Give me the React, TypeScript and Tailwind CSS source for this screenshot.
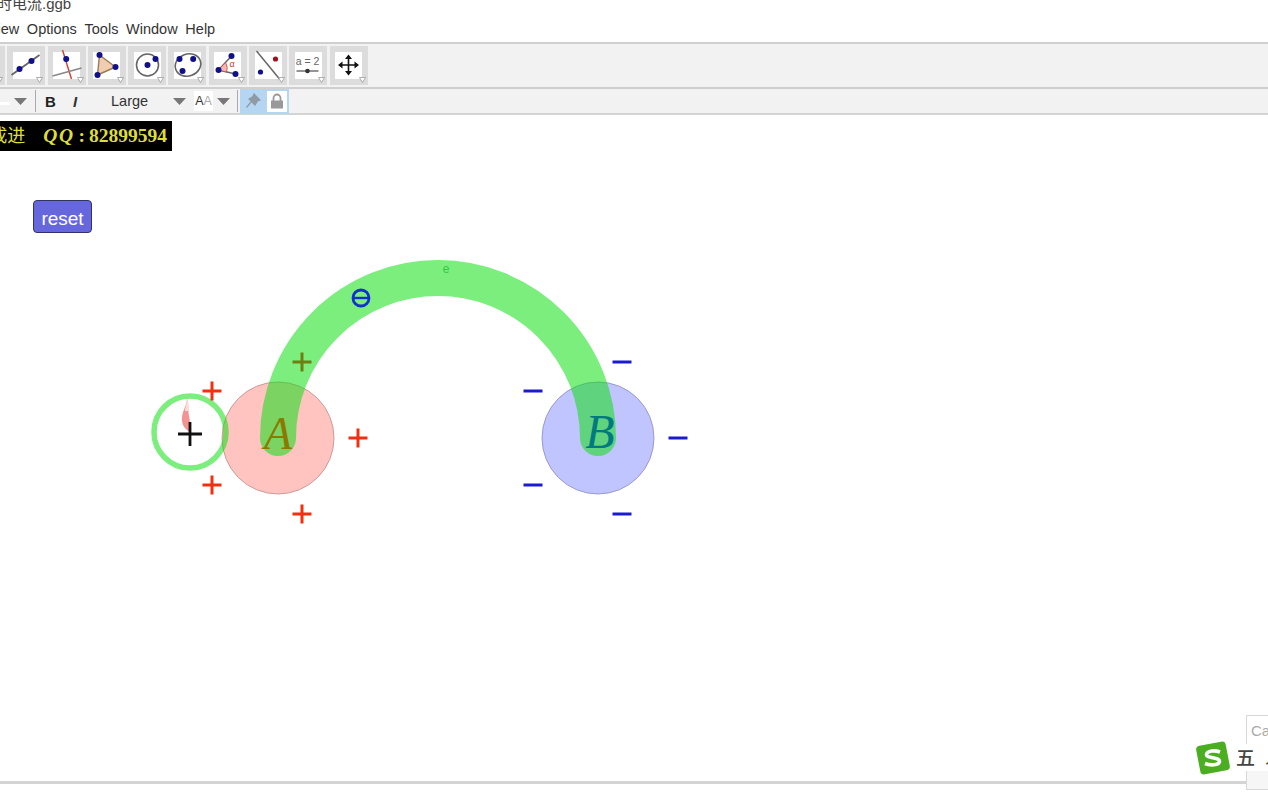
const sans = { fontFamily: '"Liberation Sans", Arial, sans-serif' }

const Dot = ({ x, y, fill = '#10108a', r = 3 }: { x: number; y: number; fill?: string; r?: number }) => (
  <circle cx={x} cy={y} r={r} fill={fill} />
)

// toolbar icons, drawn in a 30x30 box
const icons = [
  <>
    <line x1="0" y1="24.5" x2="28" y2="4.5" stroke="#666" strokeWidth="1.8" />
    <Dot x={8} y={18.5} />
    <Dot x={20} y={10.5} />
  </>,
  <>
    <line x1="11" y1="-0.5" x2="20" y2="28.5" stroke="#d04030" strokeWidth="1.4" />
    <line x1="1" y1="25.5" x2="30" y2="17.5" stroke="#888" strokeWidth="1.8" />
    <Dot x={14.7} y={8.5} />
  </>,
  <>
    <polygon points="8,4.5 24,16.5 6,24.5" fill="#f0cdb0" stroke="#9a7a50" strokeWidth="1.4" />
    <Dot x={8} y={4.5} />
    <Dot x={24} y={16.5} />
    <Dot x={6} y={24.5} />
  </>,
  <>
    <circle cx="15" cy="14.5" r="11" fill="none" stroke="#666" strokeWidth="1.6" />
    <Dot x={15} y={14.5} />
    <Dot x={23} y={8.5} />
  </>,
  <>
    <ellipse cx="15.5" cy="14.5" rx="13" ry="11" fill="none" stroke="#666" strokeWidth="1.6" transform="rotate(-20 15.5 14.5)" />
    <Dot x={7} y={8.5} />
    <Dot x={20.7} y={8.5} />
    <Dot x={10} y={20.5} />
  </>,
  <>
    <path d="M6 19.5 L19 5.5 M6 19.5 L23 23.5" stroke="#666" strokeWidth="1.5" fill="none" />
    <path d="M6 19.5 L13 12 Q16 17 14 21.5 Z" fill="#f5b8b8" stroke="#d04030" strokeWidth="0.8" />
    <Dot x={6} y={19.5} />
    <Dot x={19} y={5.5} />
    <Dot x={23} y={23.5} />
    <text x="17" y="16" fontSize="9" fill="#d04030" style={sans}>α</text>
  </>,
  <>
    <line x1="3" y1="0.5" x2="26" y2="28.5" stroke="#666" strokeWidth="1.5" />
    <Dot x={22} y={8.5} fill="#a01020" r={2.6} />
    <Dot x={7} y={21.5} r={2.6} />
  </>,
  <>
    <text x="14" y="14" fontSize="10.5" textAnchor="middle" fill="#666" style={sans}>a = 2</text>
    <line x1="3" y1="20.5" x2="25" y2="20.5" stroke="#666" strokeWidth="1.4" />
    <circle cx="14" cy="20.5" r="2.3" fill="#333" />
  </>,
  <>
    <path d="M15 6 V23 M6.5 14.5 H23.5" stroke="#111" strokeWidth="1.6" />
    <path d="M15 4 L11.5 8.5 H18.5 Z M15 25 L11.5 20.5 H18.5 Z M4.5 14.5 L9 11 V18 Z M25.5 14.5 L21 11 V18 Z" fill="#111" />
  </>,
]

const ToolButton = ({ children }: { children?: React.ReactNode }) => (
  <div className="relative flex h-[39px] w-[38px] shrink-0 items-center justify-center bg-[#dcdcdc]">
    <div className="h-[27px] w-[27px] bg-white">
      <svg viewBox="1.5 1.5 27 27" className="h-full w-full overflow-visible">{children}</svg>
    </div>
    <svg viewBox="0 0 7 6" className="absolute right-[2px] bottom-[2px] h-[6px] w-[7px]">
      <path d="M0.5 0.5 H6.5 L3.5 5.5 Z" fill="#fff" stroke="#999" strokeWidth="0.8" />
    </svg>
  </div>
)

const Caret = ({ className }: { className: string }) => (
  <svg viewBox="0 0 13 7" className={`h-[7px] w-[13px] shrink-0 ${className}`}>
    <path d="M0 0 H13 L6.5 7 Z" fill="#777" />
  </svg>
)

const Plus = ({ x, y, color = '#f03010', a = 9.5, w = 3 }: { x: number; y: number; color?: string; a?: number; w?: number }) => (
  <path d={`M${x - a} ${y} H${x + a} M${x} ${y - a} V${y + a}`} stroke={color} strokeWidth={w} fill="none" />
)

const Minus = ({ x, y }: { x: number; y: number }) => (
  <line x1={x - 9.5} y1={y} x2={x + 9.5} y2={y} stroke="#1a1ad0" strokeWidth="3" />
)

export default function App() {
  return (
    <div className="relative flex h-[793px] w-[1268px] flex-col overflow-hidden bg-white text-[#333]" style={sans}>
      {/* title */}
      <div className="-mt-[6px] h-[24px] shrink-0 text-[15px] leading-[20px] whitespace-nowrap text-[#444]" style={{ fontFamily: '"Liberation Sans", "Noto Sans CJK SC", sans-serif' }}>
        <span className="-ml-[3px] inline-block">时电流.ggb</span>
      </div>

      {/* menu */}
      <div className="flex h-[24px] shrink-0 items-center gap-[7.7px] pb-px text-[14.5px] whitespace-nowrap">
        <span className="-ml-[12px]">View</span>
        <span>Options</span>
        <span>Tools</span>
        <span>Window</span>
        <span>Help</span>
      </div>

      {/* toolbar */}
      <div className="flex h-[47px] shrink-0 items-center gap-[2.3px] border-y-2 border-y-[#cfcfcf] bg-[#f2f2f2]">
        <div className="-ml-[33px]">
          <ToolButton />
        </div>
        {icons.map((icon, i) => (
          <ToolButton key={i}>{icon}</ToolButton>
        ))}
      </div>

      {/* style bar */}
      <div className="flex h-[26px] shrink-0 items-center border-b-2 border-b-[#d4d4d4] bg-[#f2f2f2] text-[14.5px]">
        <div className="mt-[5px] h-[3px] w-[10px] bg-white" />
        <Caret className="ml-[4px]" />
        <div className="ml-[8px] h-[22px] w-px bg-[#aaa]" />
        <span className="mt-[2px] ml-[9px] w-[11px] text-[15px] font-bold text-[#222]">B</span>
        <span className="mt-[2px] ml-[17px] w-[6px] text-[15px] font-bold text-[#333] italic">I</span>
        <span className="mt-[2px] ml-[32px] w-[56px]">Large</span>
        <Caret className="ml-[6px]" />
        <div className="ml-[8px] flex h-[20px] w-[19px] items-center justify-center bg-white text-[12.5px]">
          A<span className="text-[#aaa]">A</span>
        </div>
        <Caret className="ml-[4px]" />
        <div className="ml-[7px] h-[22px] w-px bg-[#aaa]" />
        <div className="ml-[2px] flex h-[25px] w-[25px] items-center justify-center bg-[#b4d6f2]">
          <svg viewBox="0 0 16 16" className="h-[16px] w-[16px]">
            <path d="M9 1 L15 7 L12.5 8 L10 12 L4 6 L8 3.5 Z M6 9 L1.5 14.5" fill="#8f9aa5" stroke="#8f9aa5" strokeWidth="1.2" />
          </svg>
        </div>
        <div className="flex h-[25px] w-[24px] items-center justify-center border-2 border-[#b4d6f2] bg-white">
          <svg viewBox="0 0 16 16" className="h-[16px] w-[16px]">
            <path d="M4.5 8 V5 a3.5 3.5 0 0 1 7 0 V8" fill="none" stroke="#999" strokeWidth="1.8" />
            <rect x="2" y="7.5" width="12" height="8" fill="#999" />
          </svg>
        </div>
      </div>

      {/* canvas */}
      <div className="relative flex-1">
        <svg viewBox="0 115 1268 666" className="absolute inset-0 h-[666px] w-[1268px]">
          <circle cx="278" cy="438" r="56" fill="#ffc4c0" stroke="#c08a8a" strokeWidth="0.8" />
          <circle cx="598" cy="438" r="56" fill="#c0c4ff" stroke="#8a8ac0" strokeWidth="0.8" />
          <path d="M278 438 A160 160 0 0 1 598 438" fill="none" stroke="#0fe014" strokeOpacity="0.55" strokeWidth="36" strokeLinecap="round" />
          <circle cx="190" cy="432" r="36" fill="none" stroke="#0fe014" strokeOpacity="0.55" strokeWidth="5.5" />

          <path d="M187 398 C187 406 181 412 182 421 C183 428 187 430 191 433 C190 425 190 420 189 416 C188 410 189 405 187 398 Z" fill="#f28080" fillOpacity="0.85" />
          <path d="M187 398 C187 403 185 407 185 411 L189 411 C188 406 189 403 187 398 Z" fill="#fbdcd8" />
          <Plus x={190} y={434} color="#111" a={12} w={2.8} />

          <Plus x={212} y={391} />
          <Plus x={212} y={485} />
          <Plus x={302} y={514} />
          <Plus x={358} y={438} />
          <Plus x={302} y={362} color="#6f7f10" />

          <Minus x={622} y={362} />
          <Minus x={533} y={391} />
          <Minus x={678} y={438} />
          <Minus x={533} y={485} />
          <Minus x={622} y={514} />

          <circle cx="361" cy="298" r="8" fill="none" stroke="#1030d0" strokeWidth="2.8" />
          <line x1="353" y1="298" x2="369" y2="298" stroke="#1030d0" strokeWidth="2.4" />
          <text x="446" y="273" fontSize="12" textAnchor="middle" fill="#35c845" style={sans}>e</text>

          <text x="278" y="449" fontSize="46" textAnchor="middle" fill="#8a7a00" fontStyle="italic" style={{ fontFamily: '"Liberation Serif", serif' }}>A</text>
          <text x="600" y="448" fontSize="48" textAnchor="middle" fill="#007a80" fontStyle="italic" style={{ fontFamily: '"Liberation Serif", serif' }}>B</text>
        </svg>

        {/* banner text object */}
        <div
          className="absolute top-[6px] left-0 flex h-[30px] w-[172px] items-center justify-end overflow-hidden bg-black pr-[5px] text-[19.5px] font-bold whitespace-nowrap text-[#dede3a]"
          style={{ fontFamily: '"Liberation Serif", "Noto Sans CJK SC", serif' }}
        >
          <span className="text-[18px] font-normal">成进</span>
          <span className="ml-[18px] tracking-[1.5px] italic">QQ</span>
          <span className="mx-[4px]">:</span>
          <span>82899594</span>
        </div>

        <button className="absolute top-[85px] left-[33px] flex h-[33px] w-[59px] items-center justify-center rounded-[4px] border border-[#33336a] bg-[#6666dd] pt-[5px] text-[19px] text-white">
          reset
        </button>
      </div>

      {/* bottom strip */}
      <div className="h-[12px] shrink-0 border-t-[3px] border-t-[#d4d4d4] bg-white" />

      {/* ime bar over the corner */}
      <div className="absolute top-[715px] left-[1246px] h-[75px] w-[30px] border border-[#d8d8d8] bg-[#f6f6f6]">
        <div className="h-[28px] bg-white pt-[4px] pl-[4px] text-[15px] text-[#aaa]">Ca</div>
      </div>
      <div className="absolute top-[744px] left-[1222px] flex h-[27px] w-[46px] items-center overflow-hidden bg-white pl-[14px] text-[19px] font-medium whitespace-nowrap text-[#444]" style={{ fontFamily: '"Noto Sans CJK SC", sans-serif' }}>
        五<span className="ml-[8px] text-[13px]">丿</span>
      </div>
      <svg viewBox="0 0 36 36" className="absolute top-[740px] left-[1195px] h-[36px] w-[36px]">
        <rect x="3" y="3.5" width="30" height="29" rx="4" fill="#4aae20" transform="rotate(-11 18 18)" />
        <path d="M25 12 C20 10 12 10.5 11.5 14.5 C11 18.5 25 17 24.5 21.5 C24 25.5 15 25.5 10 23.5" fill="none" stroke="#fff" strokeWidth="3.6" />
      </svg>
    </div>
  )
}
